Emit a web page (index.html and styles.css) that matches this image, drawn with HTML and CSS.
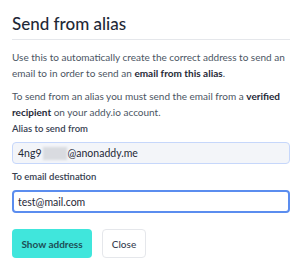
FILE: index.html
```html
<!DOCTYPE html>
<html>
<head>
<meta charset="utf-8">
<link rel="stylesheet" href="styles.css">
</head>
<body>
<div class="modal">
  <h2 class="title">Send from alias</h2>
  <div class="divider"></div>
  <p class="text">Use this to automatically create the correct address to send an email to in order to send an <b>email from this alias</b>.</p>
  <p class="text">To send from an alias you must send the email from a <b>verified recipient</b> on your addy.io account.</p>
  <label class="label">Alias to send from</label>
  <div class="input readonly">4ng9<span class="blur"></span>@anonaddy.me</div>
  <label class="label second">To email destination</label>
  <div class="input focus">test@mail.com</div>
  <div class="actions">
    <button class="btn primary">Show address</button>
    <button class="btn secondary">Close</button>
  </div>
</div>
</body>
</html>
```
FILE: styles.css
```css
html, body { margin: 0; padding: 0; background: #fff; }
body { font-family: Lato, "Open Sans", sans-serif; width: 300px; height: 267px; overflow: hidden; }
.modal { padding: 12px 10px 0 12px; display: flex; flex-direction: column; }
.title { margin: 0; font-size: 17px; font-weight: 500; color: #1f2937; line-height: 22px; padding-top: 1px; }
.divider { height: 1px; background: #e5e7eb; margin-top: 4px; }
.text { margin: 9px 0 0; font-size: 10px; line-height: 16px; color: #4b5563; }
.text + .text { margin-top: 7px; }
.text b { color: #1f2937; font-weight: 700; }
.label { font-size: 9.5px; font-weight: 600; color: #374151; margin-top: 2px; line-height: 14px; }
.label.second { margin-top: 6px; }
.input { margin-top: 6px; border-radius: 4px; font-size: 10.5px; padding: 0 5px; color: #1f2937; display: flex; align-items: center; box-sizing: border-box; }
.readonly { background: #f3f5f9; border: 1px solid #c6d7fb; height: 22px; }
.focus { background: #fff; border: 2px solid #5b8def; height: 23px; padding-left: 4px; }
.blur { display: inline-block; width: 24px; height: 13px; background: #d9dbe0; margin: 0 1px; filter: blur(1px); }
.actions { display: flex; gap: 10px; margin-top: 16px; }
.btn { font-family: inherit; font-size: 10px; height: 29px; border-radius: 4px; cursor: pointer; }
.primary { background: #40e6dc; border: none; color: #1d4e56; font-weight: 700; padding: 0 9px; width: 80px; }
.secondary { background: #fff; border: 1px solid #e5e7eb; color: #374151; font-weight: 500; padding: 0; width: 44px; }
```
